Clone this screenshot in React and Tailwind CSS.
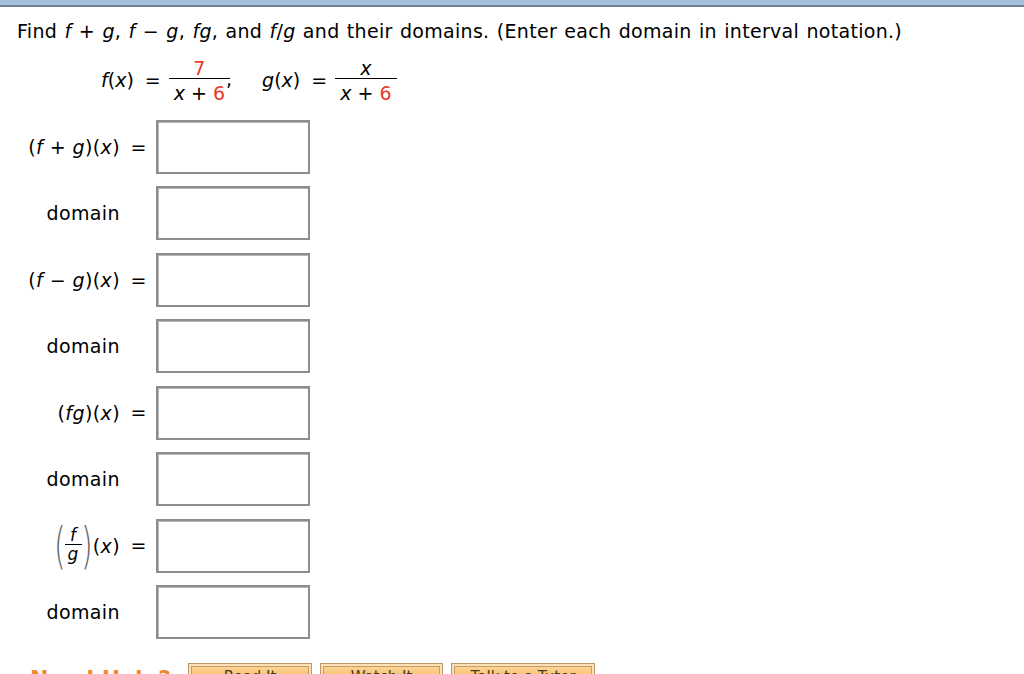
import React from 'react';

const font = { fontFamily: '"DejaVu Sans", Verdana, sans-serif' };

function I({ children }) {
  return <span className="italic">{children}</span>;
}

function Red({ children }) {
  return <span className="text-[#e8392a]">{children}</span>;
}

function Frac({ top, bottom, className = '' }) {
  return (
    <span className={`inline-flex flex-col items-center ${className}`}>
      <span className="px-[5px] leading-[20px]">{top}</span>
      <span className="self-stretch border-t-[1.5px] border-black" />
      <span className="px-[5px] leading-[20px] pt-[4px]">{bottom}</span>
    </span>
  );
}

function AnswerBox() {
  return (
    <div className="w-[154px] h-[54px] border-2 border-[#8d8d8d] bg-white shadow-[inset_1px_1px_0_#b5b5b5]" />
  );
}

const rows = [
  { label: <>(<I>f</I> + <I>g</I>)(<I>x</I>)</>, eq: true },
  { label: 'domain', eq: false },
  { label: <>(<I>f</I> − <I>g</I>)(<I>x</I>)</>, eq: true },
  { label: 'domain', eq: false },
  { label: <>(<I>fg</I>)(<I>x</I>)</>, eq: true },
  { label: 'domain', eq: false },
  {
    label: (
      <span className="inline-flex items-center">
        <span className="text-[50px] leading-[50px] font-light text-[#666] scale-x-[0.6] -mr-[5px]">(</span>
        <span className="inline-flex flex-col items-center text-[17px]">
          <span className="leading-[17px] px-[3px]"><I>f</I></span>
          <span className="self-stretch border-t border-black" />
          <span className="leading-[19px] px-[3px]"><I>g</I></span>
        </span>
        <span className="text-[50px] leading-[50px] font-light text-[#666] scale-x-[0.6] -ml-[5px] -mr-[4px]">)</span>
        <span>(<I>x</I>)</span>
      </span>
    ),
    eq: true,
  },
  { label: 'domain', eq: false },
];

function HelpButton({ children, width }) {
  return (
    <div className={`${width} h-[28px] border border-[#bf9566] bg-[#fde1b6] p-[2px]`}>
      <div className="h-full border border-[#c89c69] bg-gradient-to-b from-[#fcd594] to-[#f3a842] flex items-center justify-center text-[15px] text-[#4a3a20]">
        {children}
      </div>
    </div>
  );
}

export default function App() {
  return (
    <div className="w-[1024px] h-[674px] overflow-hidden bg-white text-black text-[19px]" style={font}>
      <div className="h-[5px] bg-[#a3c1dc]" />
      <div className="h-[2px] bg-[#6e8296]" />
      <div className="px-[17px]">
        <p className="pt-[12px] leading-[24px] tracking-[0.3px] [word-spacing:1px]">
          Find <I>f</I> + <I>g</I>, <I>f</I> − <I>g</I>, <I>fg</I>, and <I>f</I>/<I>g</I> and their domains. (Enter each domain in interval notation.)
        </p>

        <div className="mt-[14px] ml-[84px] flex items-center h-[46px]">
          <span><I>f</I>(<I>x</I>)</span>
          <span className="ml-[11px]">=</span>
          <Frac className="ml-[8px]" top={<Red>7</Red>} bottom={<><I>x</I> + <Red>6</Red></>} />
          <span className="self-end mb-[10px] -ml-[4px]">,</span>
          <span className="ml-[30px]"><I>g</I>(<I>x</I>)</span>
          <span className="ml-[11px]">=</span>
          <Frac className="ml-[8px]" top={<I>x</I>} bottom={<><I>x</I> + <Red>6</Red></>} />
        </div>

        <div className="mt-[17px] grid grid-cols-[104px_35px_154px] gap-y-[12.43px] items-center">
          {rows.map((r, i) => (
            <React.Fragment key={i}>
              <div className="text-right leading-[24px] tracking-[0.4px] pr-[1px]">{r.label}</div>
              <div className="text-center">{r.eq ? '=' : ''}</div>
              <AnswerBox />
            </React.Fragment>
          ))}
        </div>

        <div className="mt-[24px] flex items-start">
          <span className="ml-[13px] mt-[3px] text-[22px] font-bold text-[#ef8a2c] leading-[26px]">Need Help?</span>
          <div className="ml-[17px] flex gap-[8px]">
            <HelpButton width="w-[124px]">Read It</HelpButton>
            <HelpButton width="w-[123px]">Watch It</HelpButton>
            <HelpButton width="w-[144px]">Talk to a Tutor</HelpButton>
          </div>
        </div>
      </div>
    </div>
  );
}
